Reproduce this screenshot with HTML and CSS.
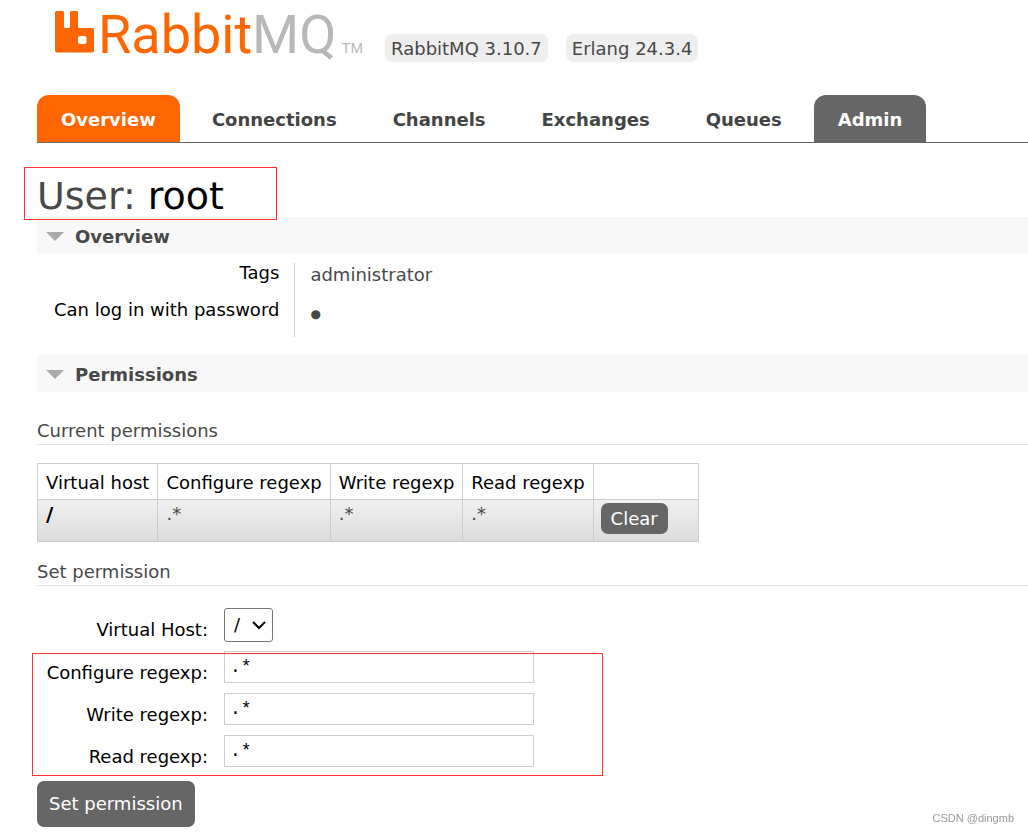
FILE: index.html
```html
<!DOCTYPE html>
<html lang="en">
  <head>
    <meta charset="UTF-8" />
    <meta name="viewport" content="width=device-width, initial-scale=1.0" />
    <title>RabbitMQ Management</title>
    <link rel="stylesheet" href="styles.css">
  </head>
  <body>
    <header>
      <a class="logo" href="#">
        <svg class="logo-mark" viewBox="0 0 39 42" aria-hidden="true">
          <path fill="#f60" fill-rule="evenodd" d="M1.500 0h6Q9 0 9 1.500V15.500Q9 17 10.500 17h3Q15 17 15 15.500V1.500Q15 0 16.500 0h5Q23 0 23 1.500V15.500Q23 17 24.500 17H37.500Q39 17 39 18.500V39.500Q39 41.500 37 41.500H2Q0 41.500 0 39.500V1.500Q0 0 1.500 0ZM25 25Q23 25 23 27v4Q23 33 25 33h4.500Q31.500 33 31.500 31V27Q31.500 25 29.500 25Z" />
        </svg>
        <span class="logo-text">Rabbit<span class="logo-mq">MQ</span></span>
        <span class="logo-tm">TM</span>
      </a>
      <div class="versions">
        <span>RabbitMQ 3.10.7</span>
        <span>Erlang 24.3.4</span>
      </div>
    </header>

    <nav>
      <ul>
        <li><a class="active" href="#">Overview</a></li>
        <li><a href="#">Connections</a></li>
        <li><a href="#">Channels</a></li>
        <li><a href="#">Exchanges</a></li>
        <li><a href="#">Queues</a></li>
        <li><a class="selected" href="#">Admin</a></li>
      </ul>
    </nav>

    <main>
      <h1 class="marked">User: <b>root</b></h1>

      <section>
        <h2>Overview</h2>
        <table class="facts">
          <tr>
            <th>Tags</th>
            <td>administrator</td>
          </tr>
          <tr>
            <th>Can log in with password</th>
            <td><span class="dot">●</span></td>
          </tr>
        </table>
      </section>

      <section>
        <h2>Permissions</h2>
        <h3 class="current">Current permissions</h3>
        <table class="list">
          <thead>
            <tr>
              <th>Virtual host</th>
              <th>Configure regexp</th>
              <th>Write regexp</th>
              <th>Read regexp</th>
              <th></th>
            </tr>
          </thead>
          <tbody>
            <tr>
              <td><a href="#">/</a></td>
              <td>.*</td>
              <td>.*</td>
              <td>.*</td>
              <td class="action"><button type="button" class="small">Clear</button></td>
            </tr>
          </tbody>
        </table>

        <h3>Set permission</h3>
        <form onsubmit="return false">
          <div class="form-row">
            <label for="vhost">Virtual Host:</label>
            <div class="select-wrap">
              <select id="vhost" name="vhost">
                <option>/</option>
              </select>
              <svg viewBox="0 0 14 9" aria-hidden="true">
                <path d="M1 1l6 6 6-6" fill="none" stroke="#000" stroke-width="2" />
              </svg>
            </div>
          </div>
          <div class="regexps marked">
            <div class="form-row">
              <label for="configure">Configure regexp:</label>
              <input type="text" id="configure" name="configure" value=".*" />
            </div>
            <div class="form-row">
              <label for="write">Write regexp:</label>
              <input type="text" id="write" name="write" value=".*" />
            </div>
            <div class="form-row">
              <label for="read">Read regexp:</label>
              <input type="text" id="read" name="read" value=".*" />
            </div>
          </div>
          <button type="submit">Set permission</button>
        </form>
      </section>
    </main>

    <div class="watermark">CSDN @dingmb</div>
  </body>
</html>
```
FILE: styles.css
```css
*,
*::before,
*::after {
  margin: 0;
  padding: 0;
  box-sizing: border-box;
}

body {
  font-family: Verdana, 'DejaVu Sans', sans-serif;
  font-size: 18px;
  line-height: 22px;
  color: #484848;
  background-color: #fff;
  padding-left: 37px;
}
header {
  display: flex;
  align-items: flex-start;
  height: 95px;
  padding: 2px 0 0 18px;
}
.logo {
  display: flex;
  align-items: baseline;
  text-decoration: none;
}
.logo-mark {
  width: 39px;
  height: 42px;
}
.logo-text {
  margin-left: 4px;
  font-family: Roboto, sans-serif;
  font-size: 54px;
  line-height: 66px;
  color: #f60;
}
.logo-mq {
  color: #b8b8b8;
}
.logo-tm {
  margin-left: 5px;
  font-family: 'Liberation Sans', sans-serif;
  font-size: 15px;
  color: #b8b8b8;
}
.versions {
  display: flex;
  gap: 18px;
  margin: 32px 0 0 22px;
}
.versions span {
  height: 28px;
  padding: 0 6px;
  line-height: 29px;
  border-radius: 7px;
  background-color: #eee;
}

nav {
  border-bottom: 1px solid #666;
}
nav ul {
  display: flex;
  gap: 8px;
  list-style: none;
}
nav a {
  display: block;
  height: 47px;
  padding: 0 24px;
  line-height: 49px;
  font-weight: bold;
  color: #444;
  text-decoration: none;
  border-radius: 12px 12px 0 0;
}
nav a.active {
  color: #fff;
  background-color: #f60;
}
nav a.selected {
  color: #fff;
  background-color: #666;
}

/* red frame drawn over the content */
.marked {
  position: relative;
}
.marked::after {
  content: '';
  position: absolute;
  border: 1px solid #f33;
  pointer-events: none;
}

h1 {
  padding-top: 32px;
  font-size: 38px;
  font-weight: normal;
  line-height: 42px;
}
h1 b {
  font-weight: normal;
  color: #000;
}
h1.marked::after {
  left: -13px;
  top: 24px;
  width: 253px;
  height: 53px;
}
h2 {
  display: flex;
  align-items: center;
  gap: 11px;
  height: 37px;
  padding: 2px 0 0 9px;
  font-size: 18px;
  background-color: #f8f8f8;
}
h2::before {
  content: '';
  border: 9px solid transparent;
  border-top-color: #aaa;
  border-bottom: 0;
}
h3 {
  height: 25px;
  margin: 19px 0 18px;
  font-size: 18px;
  font-weight: normal;
  border-bottom: 1px solid #e4e4e4;
}
h3.current {
  margin-top: 28px;
}

table {
  border-collapse: collapse;
}
.facts {
  margin: 9px 0 18px 0;
}
.facts th {
  height: 37px;
  padding: 0 15px 0 17px;
  font-weight: normal;
  text-align: right;
  vertical-align: top;
  line-height: 20px;
  color: #000;
  border-right: 1px solid #ccc;
}
.facts td {
  padding: 0 15px;
  line-height: 24px;
  vertical-align: top;
}
.dot {
  font-size: 12px;
}
.list th,
.list td {
  padding: 3px 8px;
  text-align: left;
  vertical-align: top;
  border: 1px solid #ccc;
}
.list th {
  height: 36px;
  padding-top: 8px;
  font-weight: normal;
  color: #000;
}
.list tbody tr {
  background: linear-gradient(#f0f0f0, #dcdcdc);
}
.list td {
  height: 42px;
}
.list a {
  font-size: 20px;
  font-weight: bold;
  color: #000;
  text-decoration: none;
}
.list .action {
  padding: 3px 30px 3px 7px;
}

button {
  display: block;
  padding: 12px;
  font: inherit;
  color: #fff;
  background-color: #666;
  border: none;
  border-radius: 7px;
  cursor: pointer;
}
button.small {
  padding: 5px 10px 4px;
}

form {
  padding-top: 4px;
}
.form-row {
  display: flex;
  gap: 16px;
  height: 42px;
}
.form-row label {
  width: 171px;
  padding-top: 11px;
  text-align: right;
  color: #000;
}
.select-wrap {
  position: relative;
}
.select-wrap svg {
  position: absolute;
  right: 7px;
  top: 13px;
  width: 14px;
  height: 9px;
  pointer-events: none;
}
select {
  appearance: none;
  width: 49px;
  height: 34px;
  padding-left: 9px;
  font: inherit;
  color: #000;
  background-color: #fff;
  border: 1px solid #767676;
  border-radius: 3px;
}
input {
  width: 310px;
  height: 32px;
  padding: 0 5px;
  font-family: 'Liberation Mono', monospace;
  font-size: 18px;
  color: #000;
  border: 1px solid #ccc;
}
.regexps {
  margin-top: 1px;
  margin-bottom: 4px;
}
.regexps.marked::after {
  left: -5px;
  top: 2px;
  width: 571px;
  height: 123px;
}

.watermark {
  position: fixed;
  right: 14px;
  bottom: 6px;
  font-family: 'Liberation Sans', sans-serif;
  font-size: 11px;
  line-height: 20px;
  color: #999;
}
```
